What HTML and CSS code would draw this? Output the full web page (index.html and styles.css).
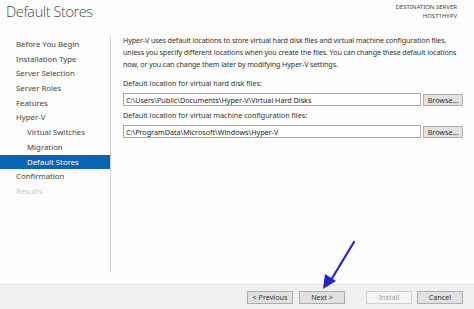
FILE: index.html
```html
<!DOCTYPE html>
<html lang="en">
<head>
    <meta charset="UTF-8">
    <title>Add Roles and Features Wizard - Default Stores</title>
    <link rel="stylesheet" href="styles.css">
</head>
<body>
    <div class="wizard">
        <div class="header">
            <h1>Default Stores</h1>
            <div class="dest">
                <div>DESTINATION SERVER</div>
                <div>HOST1HYPV</div>
            </div>
        </div>
        <div class="main">
            <ul class="nav">
                <li>Before You Begin</li>
                <li>Installation Type</li>
                <li>Server Selection</li>
                <li>Server Roles</li>
                <li>Features</li>
                <li>Hyper-V</li>
                <li class="sub">Virtual Switches</li>
                <li class="sub">Migration</li>
                <li class="sub active">Default Stores</li>
                <li>Confirmation</li>
                <li class="disabled">Results</li>
            </ul>
            <div class="content">
                <p class="intro">Hyper-V uses default locations to store virtual hard disk files and virtual machine configuration files, unless you specify different locations when you create the files. You can change these default locations now, or you can change them later by modifying Hyper-V settings.</p>
                <label for="vhdPath">Default location for virtual hard disk files:</label>
                <div class="path-row">
                    <input type="text" id="vhdPath" value="C:\Users\Public\Documents\Hyper-V\Virtual Hard Disks">
                    <button class="btn">Browse...</button>
                </div>
                <label for="vmPath">Default location for virtual machine configuration files:</label>
                <div class="path-row">
                    <input type="text" id="vmPath" value="C:\ProgramData\Microsoft\Windows\Hyper-V">
                    <button class="btn">Browse...</button>
                </div>
            </div>
        </div>
        <div class="footer">
            <button class="btn">&lt; Previous</button>
            <button class="btn next">Next &gt;</button>
            <button class="btn install" disabled>Install</button>
            <button class="btn">Cancel</button>
        </div>
        <!-- annotation arrow pointing at Next -->
        <svg class="arrow" width="40" height="52" viewBox="0 0 40 52">
            <line x1="36" y1="2" x2="13" y2="40" stroke="#2424c8" stroke-width="2.2" stroke-linecap="round"/>
            <polygon points="5,49 7,34 18,41" fill="#2424c8"/>
        </svg>
    </div>
</body>
</html>
```

FILE: styles.css
```css
body {
    margin: 0;
    font-family: "Noto Sans", "Open Sans", sans-serif;
    background: #fdfdfd;
    color: #333;
}
.wizard {
    position: relative;
    width: 474px;
    height: 309px;
    display: flex;
    flex-direction: column;
    overflow: hidden;
}
.header {
    height: 33px;
    display: flex;
    justify-content: space-between;
    align-items: flex-start;
}
h1 {
    margin: 2px 0 0 6px;
    font-family: "Open Sans", sans-serif;
    font-weight: 300;
    font-size: 14.5px;
    letter-spacing: -0.4px;
    color: #4a4a4a;
}
.dest {
    margin: 3px 17px 0 0;
    text-align: right;
    font-size: 6px;
    line-height: 9px;
    color: #444;
}
.main {
    flex: 1;
    display: flex;
}
.nav {
    list-style: none;
    margin: 4px 0 12px 0;
    padding: 0;
    width: 110px;
    border-right: 1px solid #d0d0d0;
    font-size: 7.8px;
}
.nav li {
    height: 14.7px;
    line-height: 14.7px;
    padding-left: 16px;
    color: #444;
}
.nav li.sub {
    padding-left: 27px;
}
.nav li.active {
    background: #0a64b4;
    color: #fff;
}
.nav li.disabled {
    color: #c8c8c8;
}
.content {
    flex: 1;
    padding: 1px 9px 0 12px;
    font-size: 7.2px;
}
.intro {
    margin: 0 0 8px 0;
    line-height: 12px;
    letter-spacing: -0.12px;
    color: #333;
}
label {
    display: block;
    margin-bottom: 5px;
    color: #333;
}
.path-row {
    display: flex;
    gap: 2px;
    margin-bottom: 4px;
    margin-right: 2px;
}
input {
    flex: 1;
    height: 13px;
    padding: 0 2px;
    border: 1px solid #aaa;
    font-family: inherit;
    font-size: 7.2px;
    color: #222;
    background: #fff;
    box-sizing: border-box;
}
.btn {
    height: 12px;
    padding: 0;
    font-family: inherit;
    font-size: 7.2px;
    color: #333;
    background: #e1e1e1;
    border: 1px solid #adadad;
    box-sizing: border-box;
}
.path-row .btn {
    width: 40px;
    margin-top: 1px;
}
.footer {
    height: 24px;
    background: #f0f0f0;
    border-top: 1px solid #e4e4e4;
    display: flex;
    align-items: center;
    justify-content: flex-end;
    padding-right: 11px;
    gap: 5px;
}
.footer .btn {
    width: 46px;
    height: 13px;
}
.footer .next {
    margin-left: 1px;
}
.footer .install {
    margin-left: 16px;
    color: #a0a0a0;
    background: #f4f4f4;
    border-color: #cfcfcf;
}
.arrow {
    position: absolute;
    left: 318px;
    top: 240px;
}
```
